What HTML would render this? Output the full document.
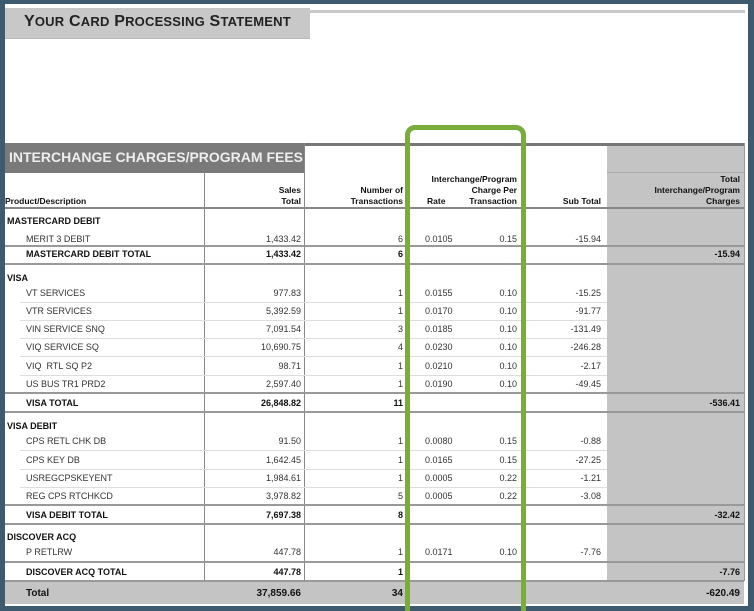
<!DOCTYPE html>
<html style="overflow:hidden;height:611px"><head><meta charset="utf-8"><style>
html,body{margin:0;overflow:hidden;}
body{width:754px;height:611px;background:#3d5a6e;position:relative;font-family:"Liberation Sans",Arial,sans-serif;}
.wrap{position:absolute;left:0;top:0;width:754px;height:611px;overflow:hidden;background:#3d5a6e;}
.doc{position:absolute;left:5px;top:4px;width:743px;height:602px;background:#fff;}
.a{position:absolute;}
.r{position:absolute;height:18px;line-height:18px;font-size:9px;color:#333;white-space:nowrap;}
.b{font-weight:bold;color:#111;}
.t{text-align:right;}
</style></head><body><div class="wrap">
<div class="doc"></div>
<div class="a" style="left:5px;top:8px;width:305px;height:30px;background:#c8c8c8;border-bottom:1px solid #bbb"></div>
<div class="a" style="left:310px;top:10px;width:435px;height:3px;background:#c8c8c8"></div>
<div class="a" style="left:24px;top:13px;font-size:16px;font-weight:bold;color:#222;letter-spacing:0.2px">Y<span style="font-size:13px">OUR</span> C<span style="font-size:13px">ARD</span> P<span style="font-size:13px">ROCESSING</span> S<span style="font-size:13px">TATEMENT</span></div>
<div class="a" style="left:607px;top:143px;width:137px;height:438px;background:#c4c4c4;border-right:1px solid #999"></div>
<div class="a" style="left:5px;top:143px;width:739px;height:3px;background:#777"></div>
<div class="a" style="left:5px;top:143px;width:299px;height:30px;background:#7a7a7a"></div>
<div class="a" style="left:9px;top:149px;font-size:14px;font-weight:bold;color:#eee">INTERCHANGE CHARGES/PROGRAM FEES</div>
<div class="a" style="left:204px;top:172px;width:1px;height:409px;background:#888"></div>
<div class="a" style="left:304px;top:143px;width:1px;height:438px;background:#888"></div>
<div class="a" style="left:407px;top:172px;width:1px;height:409px;background:#888"></div>
<div class="a" style="left:5px;top:196px;font-size:8.5px;font-weight:bold;color:#111">Product/Description</div>
<div class="a t" style="left:220px;top:185px;width:81px;font-size:8.5px;font-weight:bold;line-height:11px;color:#111">Sales<br>Total</div>
<div class="a t" style="left:310px;top:185px;width:93px;font-size:8.5px;font-weight:bold;line-height:11px;color:#111">Number of<br>Transactions</div>
<div class="a t" style="left:410px;top:174px;width:107px;font-size:8.5px;font-weight:bold;line-height:11px;color:#111">Interchange/Program<br>Charge Per<br><span style="float:left;padding-left:17px">Rate</span>Transaction</div>
<div class="a t" style="left:530px;top:196px;width:71px;font-size:8.5px;font-weight:bold;color:#111">Sub Total</div>
<div class="a t" style="left:610px;top:174px;width:130px;font-size:8.5px;font-weight:bold;line-height:11px;color:#111">Total<br>Interchange/Program<br>Charges</div>
<div class="a" style="left:607px;top:172px;width:137px;height:1px;background:#aaa"></div>
<div class="a" style="left:5px;top:207px;width:739px;height:2px;background:#888"></div>

<div class="a" style="left:5px;top:245px;width:739px;height:2px;background:#999"></div>
<div class="a" style="left:5px;top:263px;width:739px;height:2px;background:#999"></div>
<div class="a" style="left:5px;top:392px;width:739px;height:2px;background:#999"></div>
<div class="a" style="left:5px;top:411px;width:739px;height:2px;background:#999"></div>
<div class="a" style="left:5px;top:504px;width:739px;height:2px;background:#999"></div>
<div class="a" style="left:5px;top:523px;width:739px;height:2px;background:#999"></div>
<div class="a" style="left:5px;top:561px;width:739px;height:2px;background:#999"></div>
<div class="a" style="left:5px;top:580px;width:739px;height:2px;background:#999"></div>
<div class="a" style="left:5px;top:582px;width:739px;height:22px;background:#c4c4c4"></div>
<div class="a" style="left:20px;top:302px;width:587px;height:1px;background:#ddd"></div>
<div class="a" style="left:20px;top:320px;width:587px;height:1px;background:#ddd"></div>
<div class="a" style="left:20px;top:338px;width:587px;height:1px;background:#ddd"></div>
<div class="a" style="left:20px;top:356px;width:587px;height:1px;background:#ddd"></div>
<div class="a" style="left:20px;top:375px;width:587px;height:1px;background:#ddd"></div>
<div class="a" style="left:20px;top:450px;width:587px;height:1px;background:#ddd"></div>
<div class="a" style="left:20px;top:469px;width:587px;height:1px;background:#ddd"></div>
<div class="a" style="left:20px;top:487px;width:587px;height:1px;background:#ddd"></div>

<div class="r b" style="left:7px;top:212px">MASTERCARD DEBIT</div>
<div class="r" style="left:26px;top:230px">MERIT 3 DEBIT</div><div class="r t" style="left:210px;top:230px;width:91px">1,433.42</div><div class="r t" style="left:310px;top:230px;width:93px">6</div><div class="r" style="left:425px;top:230px">0.0105</div><div class="r t" style="left:460px;top:230px;width:57px">0.15</div><div class="r t" style="left:530px;top:230px;width:71px">-15.94</div>
<div class="r b" style="left:26px;top:245px">MASTERCARD DEBIT TOTAL</div><div class="r t b" style="left:210px;top:245px;width:91px">1,433.42</div><div class="r t b" style="left:310px;top:245px;width:93px">6</div><div class="r t b" style="left:610px;top:245px;width:130px">-15.94</div>

<div class="r b" style="left:7px;top:269px">VISA</div>
<div class="r" style="left:26px;top:284px">VT SERVICES</div><div class="r t" style="left:210px;top:284px;width:91px">977.83</div><div class="r t" style="left:310px;top:284px;width:93px">1</div><div class="r" style="left:425px;top:284px">0.0155</div><div class="r t" style="left:460px;top:284px;width:57px">0.10</div><div class="r t" style="left:530px;top:284px;width:71px">-15.25</div>
<div class="r" style="left:26px;top:302px">VTR SERVICES</div><div class="r t" style="left:210px;top:302px;width:91px">5,392.59</div><div class="r t" style="left:310px;top:302px;width:93px">1</div><div class="r" style="left:425px;top:302px">0.0170</div><div class="r t" style="left:460px;top:302px;width:57px">0.10</div><div class="r t" style="left:530px;top:302px;width:71px">-91.77</div>
<div class="r" style="left:26px;top:320px">VIN SERVICE SNQ</div><div class="r t" style="left:210px;top:320px;width:91px">7,091.54</div><div class="r t" style="left:310px;top:320px;width:93px">3</div><div class="r" style="left:425px;top:320px">0.0185</div><div class="r t" style="left:460px;top:320px;width:57px">0.10</div><div class="r t" style="left:530px;top:320px;width:71px">-131.49</div>
<div class="r" style="left:26px;top:338px">VIQ SERVICE SQ</div><div class="r t" style="left:210px;top:338px;width:91px">10,690.75</div><div class="r t" style="left:310px;top:338px;width:93px">4</div><div class="r" style="left:425px;top:338px">0.0230</div><div class="r t" style="left:460px;top:338px;width:57px">0.10</div><div class="r t" style="left:530px;top:338px;width:71px">-246.28</div>
<div class="r" style="left:26px;top:357px">VIQ &nbsp;RTL SQ P2</div><div class="r t" style="left:210px;top:357px;width:91px">98.71</div><div class="r t" style="left:310px;top:357px;width:93px">1</div><div class="r" style="left:425px;top:357px">0.0210</div><div class="r t" style="left:460px;top:357px;width:57px">0.10</div><div class="r t" style="left:530px;top:357px;width:71px">-2.17</div>
<div class="r" style="left:26px;top:375px">US BUS TR1 PRD2</div><div class="r t" style="left:210px;top:375px;width:91px">2,597.40</div><div class="r t" style="left:310px;top:375px;width:93px">1</div><div class="r" style="left:425px;top:375px">0.0190</div><div class="r t" style="left:460px;top:375px;width:57px">0.10</div><div class="r t" style="left:530px;top:375px;width:71px">-49.45</div>
<div class="r b" style="left:26px;top:394px">VISA TOTAL</div><div class="r t b" style="left:210px;top:394px;width:91px">26,848.82</div><div class="r t b" style="left:310px;top:394px;width:93px">11</div><div class="r t b" style="left:610px;top:394px;width:130px">-536.41</div>

<div class="r b" style="left:7px;top:417px">VISA DEBIT</div>
<div class="r" style="left:26px;top:432px">CPS RETL CHK DB</div><div class="r t" style="left:210px;top:432px;width:91px">91.50</div><div class="r t" style="left:310px;top:432px;width:93px">1</div><div class="r" style="left:425px;top:432px">0.0080</div><div class="r t" style="left:460px;top:432px;width:57px">0.15</div><div class="r t" style="left:530px;top:432px;width:71px">-0.88</div>
<div class="r" style="left:26px;top:451px">CPS KEY DB</div><div class="r t" style="left:210px;top:451px;width:91px">1,642.45</div><div class="r t" style="left:310px;top:451px;width:93px">1</div><div class="r" style="left:425px;top:451px">0.0165</div><div class="r t" style="left:460px;top:451px;width:57px">0.15</div><div class="r t" style="left:530px;top:451px;width:71px">-27.25</div>
<div class="r" style="left:26px;top:469px">USREGCPSKEYENT</div><div class="r t" style="left:210px;top:469px;width:91px">1,984.61</div><div class="r t" style="left:310px;top:469px;width:93px">1</div><div class="r" style="left:425px;top:469px">0.0005</div><div class="r t" style="left:460px;top:469px;width:57px">0.22</div><div class="r t" style="left:530px;top:469px;width:71px">-1.21</div>
<div class="r" style="left:26px;top:487px">REG CPS RTCHKCD</div><div class="r t" style="left:210px;top:487px;width:91px">3,978.82</div><div class="r t" style="left:310px;top:487px;width:93px">5</div><div class="r" style="left:425px;top:487px">0.0005</div><div class="r t" style="left:460px;top:487px;width:57px">0.22</div><div class="r t" style="left:530px;top:487px;width:71px">-3.08</div>
<div class="r b" style="left:26px;top:506px">VISA DEBIT TOTAL</div><div class="r t b" style="left:210px;top:506px;width:91px">7,697.38</div><div class="r t b" style="left:310px;top:506px;width:93px">8</div><div class="r t b" style="left:610px;top:506px;width:130px">-32.42</div>

<div class="r b" style="left:7px;top:528px">DISCOVER ACQ</div>
<div class="r" style="left:26px;top:543px">P RETLRW</div><div class="r t" style="left:210px;top:543px;width:91px">447.78</div><div class="r t" style="left:310px;top:543px;width:93px">1</div><div class="r" style="left:425px;top:543px">0.0171</div><div class="r t" style="left:460px;top:543px;width:57px">0.10</div><div class="r t" style="left:530px;top:543px;width:71px">-7.76</div>
<div class="r b" style="left:26px;top:563px">DISCOVER ACQ TOTAL</div><div class="r t b" style="left:210px;top:563px;width:91px">447.78</div><div class="r t b" style="left:310px;top:563px;width:93px">1</div><div class="r t b" style="left:610px;top:563px;width:130px">-7.76</div>

<div class="r b" style="left:26px;top:585px;font-size:10px">Total</div><div class="r t b" style="left:210px;top:585px;width:91px;font-size:10px">37,859.66</div><div class="r t b" style="left:310px;top:585px;width:93px;font-size:10px">34</div><div class="r t b" style="left:610px;top:585px;width:130px;font-size:10px">-620.49</div>

<div class="a" style="left:405px;top:125px;width:111px;height:500px;border:5px solid #78ac3c;border-radius:10px"></div>
</div></body></html>
